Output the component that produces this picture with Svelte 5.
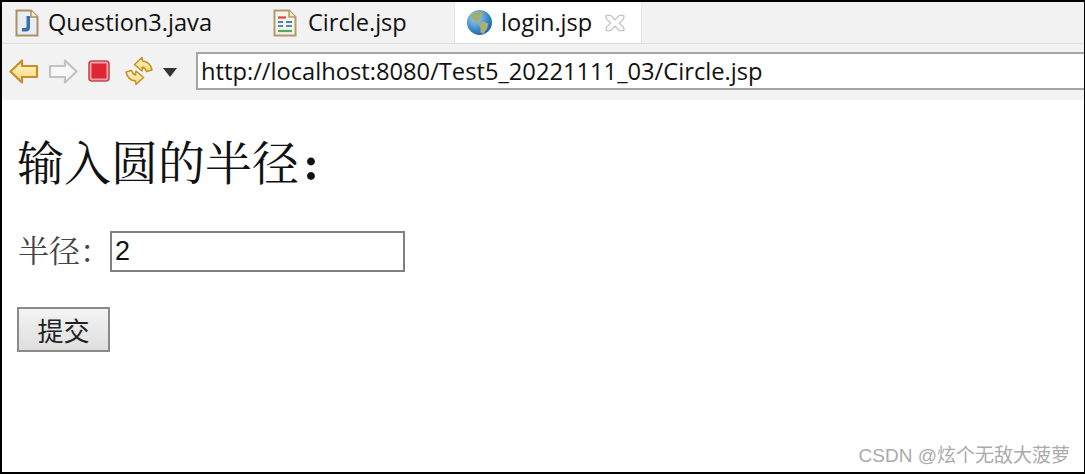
<script>
  const tabs = [
    { name: 'Question3.java', icon: 'java', active: false },
    { name: 'Circle.jsp', icon: 'jsp', active: false },
    { name: 'login.jsp', icon: 'globe', active: true }
  ];
</script>

<div class="frame">
  <div class="tabbar">
    {#each tabs as tab}
      <div class="tab {tab.icon}" class:active={tab.active}>
        {#if tab.icon === 'java'}
          <svg class="ficon" width="24" height="28" viewBox="0 0 24 28">
            <path d="M1.5 1.5H16L22.5 8V26.5H1.5Z" fill="#e6edf6" stroke="#ad9060" stroke-width="2"/>
            <path d="M16 1.5V8H22.5" fill="#f4ead2" stroke="#ad9060" stroke-width="1.5"/>
            <path d="M15 7V18.5Q15 22.5 11 22.5H7V19H10Q11.5 19 11.5 17.5V7Z" fill="#3a6ea5"/>
          </svg>
        {:else if tab.icon === 'jsp'}
          <svg class="ficon" width="24" height="28" viewBox="0 0 24 28">
            <path d="M1.5 1.5H16L22.5 8V26.5H1.5Z" fill="#f6f4ee" stroke="#b59a66" stroke-width="2"/>
            <path d="M16 1.5V8H22.5" fill="#f0e4c4" stroke="#b59a66" stroke-width="1.5"/>
            <path d="M5 8.5H13" stroke="#e0443e" stroke-width="2.2"/>
            <path d="M5 13H10M13 13H19" stroke="#4f7fb5" stroke-width="2"/>
            <path d="M5 17H10M13 17H19" stroke="#5a86b5" stroke-width="2"/>
            <path d="M5 22H19" stroke="#56a860" stroke-width="2.2"/>
          </svg>
        {:else}
          <svg class="ficon" width="27" height="27" viewBox="0 0 28 28">
            <defs>
              <radialGradient id="sea" cx="35%" cy="30%" r="80%">
                <stop offset="0" stop-color="#a6d4f2"/>
                <stop offset="0.6" stop-color="#3f8bc8"/>
                <stop offset="1" stop-color="#1d5a96"/>
              </radialGradient>
            </defs>
            <circle cx="14" cy="14" r="13" fill="url(#sea)"/>
            <path d="M6 5Q10 2 16 3L18 6L15 8L16 11L12 12L11 15L8 12L5 10Z" fill="#a3ad72"/>
            <path d="M13 15L18 13L23 15L22 20L18 26L15 24L15 19Z" fill="#a8b076"/>
          </svg>
        {/if}
        <span class="tab-label">{tab.name}</span>
        {#if tab.active}
          <svg class="close" width="22" height="20" viewBox="0 0 20 18">
            <path d="M2 2H6L10 6L14 2H18V5L14 9L18 13V16H14L10 12L6 16H2V13L6 9L2 5Z" fill="#fff" stroke="#c4c4c4" stroke-width="1.2"/>
          </svg>
        {/if}
      </div>
    {/each}
  </div>

  <div class="toolbar">
    <svg class="tool t-back" width="30" height="25" viewBox="0 0 30 25">
      <defs>
        <linearGradient id="gold" x1="0" y1="0" x2="0" y2="1">
          <stop offset="0" stop-color="#fff6d2"/>
          <stop offset="1" stop-color="#fbd672"/>
        </linearGradient>
      </defs>
      <path d="M1.5 12.5L13 1.5V7H28V18H13V23.5Z" fill="url(#gold)" stroke="#c48f2e" stroke-width="2.2" stroke-linejoin="round"/>
    </svg>
    <svg class="tool t-fwd" width="30" height="25" viewBox="0 0 30 25">
      <path d="M28.5 12.5L17 1.5V7H2V18H17V23.5Z" fill="#f8f8f8" stroke="#c2c2c2" stroke-width="2.2" stroke-linejoin="round"/>
    </svg>
    <svg class="tool t-stop" width="22" height="22" viewBox="0 0 22 22">
      <rect x="1" y="1" width="20" height="20" rx="3" fill="#efa6aa" stroke="#c4474d" stroke-width="1.6"/>
      <rect x="3.5" y="3.5" width="15" height="15" fill="#e02535"/>
    </svg>
    <svg class="tool t-refresh" width="28" height="30" viewBox="0 0 28 30">
      <path d="M9.5 8.5L17 1.5L17.5 5Q25 5.5 27 14L21.5 15.5Q20 11.5 17.5 11L17 15Z" fill="url(#gold)" stroke="#c8912a" stroke-width="1.6" stroke-linejoin="round"/>
      <path d="M18.5 21.5L11 28.5L10.5 25Q3 24.5 1 16L6.5 14.5Q8 18.5 10.5 19L11 15Z" fill="url(#gold)" stroke="#c8912a" stroke-width="1.6" stroke-linejoin="round"/>
    </svg>
    <svg class="tool t-drop" width="14" height="9" viewBox="0 0 14 9">
      <path d="M0 0H14L7 9Z" fill="#333"/>
    </svg>
    <input class="url" value="http://localhost:8080/Test5_20221111_03/Circle.jsp" readonly />
  </div>

  <main class="page">
    <h2>输入圆的半径<b>:</b></h2>
    <div class="field">
      <label for="r">半径：</label>
      <input id="r" class="radius" value="2" />
    </div>
    <button type="button">提交</button>
  </main>

  <div class="mark">CSDN @炫个无敌大菠萝</div>
</div>

<style>
  :global(body) { margin: 0; background: #fff; }
  .frame {
    position: relative;
    box-sizing: border-box;
    width: 1085px;
    height: 474px;
    border: 2px solid #000;
    border-right-width: 1px;
    overflow: hidden;
    background: #fff;
  }
  .tabbar {
    display: flex;
    height: 42px;
    padding-left: 11px;
    background: #f2f2f2;
    border-bottom: 1px solid #dcdcdc;
    box-sizing: border-box;
    font: 23.6px/38px "Open Sans", "Noto Sans", sans-serif;
    color: #111;
  }
  .tab { display: flex; align-items: center; gap: 9px; }
  .tab-label { position: relative; top: -1px; }
  .tab.java { width: 260px; padding-left: 2px; gap: 9px; box-sizing: border-box; }
  .tab.jsp { width: 181px; gap: 11px; }
  .tab.active {
    width: 188px;
    box-sizing: border-box;
    background: #fff;
    padding-left: 11px;
    gap: 8px;
    border-left: 1px solid #e4e4e4;
    border-right: 1px solid #e4e4e4;
  }
  .close { margin-left: 4px; }
  .toolbar {
    display: flex;
    align-items: center;
    height: 56px;
    padding-left: 7px;
    padding-bottom: 2px;
    box-sizing: border-box;
    background: #f2f2f2;
  }
  .tool { flex: none; }
  .t-fwd { margin-left: 9px; }
  .t-stop { margin-left: 10px; }
  .t-refresh { margin-left: 15px; }
  .t-drop { margin-left: 10px; margin-top: 2px; }
  .url {
    flex: none;
    width: 900px;
    height: 38px;
    margin: 0 0 0 19px;
    box-sizing: border-box;
    border: 2px solid #a5a5a5;
    border-right: 0;
    background: #fff;
    padding: 0 3px;
    font: 23.7px "Open Sans", "Noto Sans", sans-serif;
    color: #111;
    outline: none;
  }
  .page { padding: 0 0 0 16px; }
  h2 {
    margin: 0 0 0 -1px;
    padding-top: 30px;
    font: normal 47px/60px "Noto Serif CJK SC", "Noto Sans CJK SC", serif;
    color: #111;
    height: 60px;
    white-space: nowrap;
  }
  h2 b { font: bold 49px/60px "Liberation Serif", serif; margin-left: 4px; }
  .field {
    display: flex;
    align-items: center;
    margin-top: 41px;
    height: 41px;
  }
  label {
    flex: none;
    width: 92px;
    padding-bottom: 7px;
    white-space: nowrap;
    font: 31px "Noto Serif CJK SC", "Noto Sans CJK SC", serif;
    color: #444;
  }
  .radius {
    width: 295px;
    height: 41px;
    margin: 0;
    box-sizing: border-box;
    border: 2px solid #808080;
    padding: 0 3px;
    font: 27px "Liberation Sans", sans-serif;
    color: #111;
    outline: none;
  }
  button {
    display: block;
    width: 93px;
    height: 45px;
    margin: 35px 0 0 -1px;
    padding: 0;
    box-sizing: border-box;
    border: 2px solid #8a8a8a;
    background: linear-gradient(#f4f4f4, #dedede);
    font: 26px "Noto Sans CJK SC", sans-serif;
    color: #222;
  }
  .mark {
    position: absolute;
    right: 14px;
    bottom: 5px;
    font: 19px "Liberation Sans", "Noto Sans CJK SC", sans-serif;
    color: #aaa;
  }
</style>
